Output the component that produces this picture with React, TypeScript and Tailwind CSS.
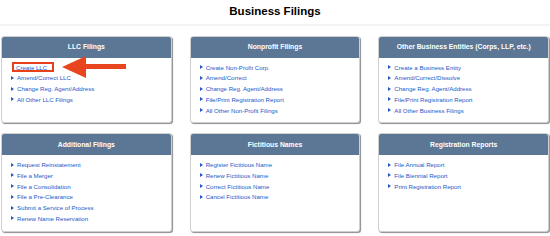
import React from 'react';

type Card = { title: string; links: string[]; highlight?: boolean };

const rowOne: Card[] = [
  {
    title: 'LLC Filings',
    links: ['Create LLC', 'Amend/Correct LLC', 'Change Reg. Agent/Address', 'All Other LLC Filings'],
    highlight: true,
  },
  {
    title: 'Nonprofit Filings',
    links: [
      'Create Non-Profit Corp.',
      'Amend/Correct',
      'Change Reg. Agent/Address',
      'File/Print Registration Report',
      'All Other Non-Profit Filings',
    ],
  },
  {
    title: 'Other Business Entities (Corps, LLP, etc.)',
    links: [
      'Create a Business Entity',
      'Amend/Correct/Dissolve',
      'Change Reg. Agent/Address',
      'File/Print Registration Report',
      'All Other Business Filings',
    ],
  },
];

const rowTwo: Card[] = [
  {
    title: 'Additional Filings',
    links: [
      'Request Reinstatement',
      'File a Merger',
      'File a Consolidation',
      'File a Pre-Clearance',
      'Submit a Service of Process',
      'Renew Name Reservation',
    ],
  },
  {
    title: 'Fictitious Names',
    links: ['Register Fictitious Name', 'Renew Fictitious Name', 'Correct Fictitious Name', 'Cancel Fictitious Name'],
  },
  {
    title: 'Registration Reports',
    links: ['File Annual Report', 'File Biennial Report', 'Print Registration Report'],
  },
];

const Bullet = () => (
  <svg width="3" height="4" viewBox="0 0 3 4" className="mr-[3px] shrink-0">
    <polygon points="0,0 3,2 0,4" fill="#2457c8" />
  </svg>
);

const FilingCard = ({ card }: { card: Card }) => (
  <div className="bg-white border border-[#cfcfcf] rounded-[3px] shadow-[1px_1px_1px_rgba(0,0,0,0.45)] overflow-hidden flex flex-col">
    <div className="h-[21px] bg-[#5b7795] flex items-center justify-center text-white font-bold text-[6.8px]">
      {card.title}
    </div>
    <div className="pt-[4px] pb-[7px] flex-1">
      {card.links.map((l, i) =>
        card.highlight && i === 0 ? (
          <div key={l} className="h-[10.7px] flex items-center pl-[10px]">
            <span className="h-[10px] w-[42px] border-2 border-[#e8401c] pl-[2px] flex items-center text-[#2457c8] text-[6.1px]">
              {l}
            </span>
          </div>
        ) : (
          <div key={l} className="h-[10.7px] flex items-center pl-[9px] text-[#2457c8] text-[6.1px]">
            <Bullet />
            {l}
          </div>
        )
      )}
    </div>
  </div>
);

export default function App() {
  return (
    <div className="relative w-[550px] h-[236px] bg-white font-['Liberation_Sans',Arial,sans-serif] overflow-hidden">
      <div className="h-[24px] flex items-center justify-center text-[11.5px] font-bold text-black">
        Business Filings
      </div>
      <div className="h-[2px] bg-[#f3f3f3]" />
      <div className="mt-[10px] pl-[1px] pr-[1px] grid grid-cols-3 gap-x-[18px] gap-y-[10px]">
        {rowOne.map(c => (
          <FilingCard key={c.title} card={c} />
        ))}
        {rowTwo.map(c => (
          <FilingCard key={c.title} card={c} />
        ))}
      </div>
      {/* annotation arrow pointing at Create LLC */}
      <svg className="absolute left-[60px] top-[54px]" width="68" height="26" viewBox="0 0 68 26">
        <polygon points="2,13 26,2 26,10 66,10 66,15 26,15 26,24" fill="#e8461e" />
      </svg>
    </div>
  );
}
